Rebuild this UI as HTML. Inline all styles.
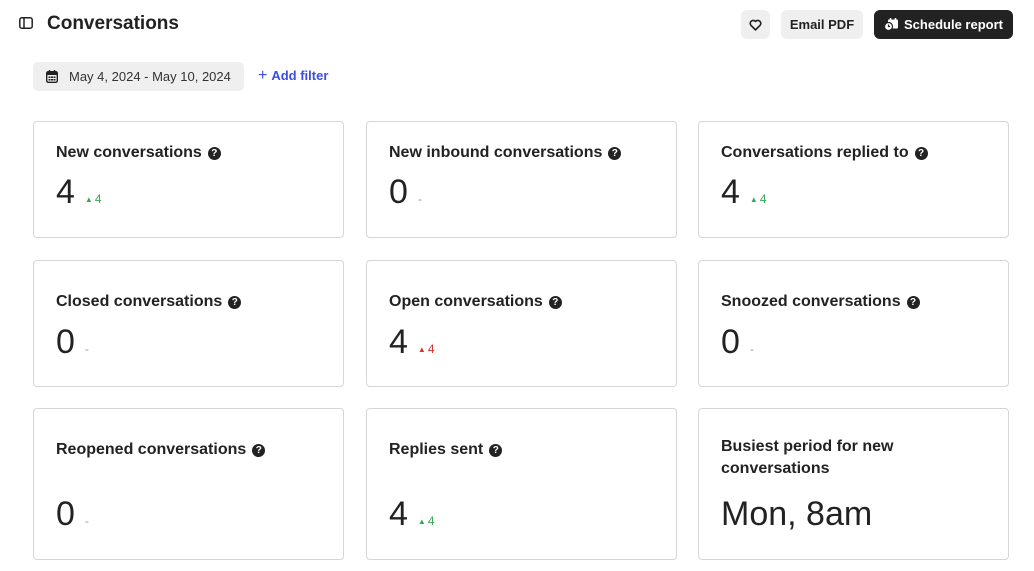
<!DOCTYPE html>
<html><head><meta charset="utf-8"><style>
*{box-sizing:border-box;margin:0;padding:0}
body{width:1034px;height:571px;background:#fff;font-family:"Liberation Sans",sans-serif;color:#1f1f1f;position:relative;overflow:hidden}
.abs{position:absolute}
h1{position:absolute;left:47px;top:13px;font-size:19px;font-weight:bold;color:#222}
.btn{position:absolute;top:10px;height:29px;border-radius:6px;background:#efefef;font-size:13px;font-weight:bold;display:flex;align-items:center;justify-content:center;color:#222}
.card{position:absolute;border:1px solid #d6d6d6;border-radius:4px;background:#fff}
.t{position:absolute;left:22px;font-size:16px;font-weight:bold;color:#222;display:flex;align-items:center}
.q{display:inline-block;width:13px;height:13px;border-radius:50%;background:#222;color:#fff;font-size:10px;text-align:center;line-height:13px;margin-left:6px;font-weight:bold}
.n{position:absolute;left:22px;font-size:34px;color:#222;display:flex;align-items:baseline}
.d{font-size:12px;margin-left:10px}
.d small{font-size:8px;margin-right:2px;position:relative;top:-1px}
.g{color:#3aa655}.r{color:#d93030}.z{color:#999}
</style></head><body>
<svg class="abs" style="left:19px;top:17px" width="14" height="12" viewBox="0 0 14 12"><rect x="0.8" y="0.8" width="12.4" height="10.4" rx="2" fill="none" stroke="#222" stroke-width="1.5"/><line x1="5" y1="1" x2="5" y2="11" stroke="#222" stroke-width="1.5"/></svg>
<h1>Conversations</h1>
<div class="btn" style="left:741px;width:29px"><svg width="13" height="12" viewBox="0 0 24 22"><path d="M12 20 L3.5 11.5 A5 5 0 0 1 12 4.5 A5 5 0 0 1 20.5 11.5 Z" fill="none" stroke="#222" stroke-width="3" stroke-linejoin="round"/></svg></div>
<div class="btn" style="left:781px;width:82px">Email PDF</div>
<div class="btn" style="left:874px;width:139px;background:#222;color:#fff"><svg style="margin-right:5px" width="15" height="13" viewBox="0 0 15 13"><rect x="4" y="1.5" width="10" height="9" rx="1" fill="#fff"/><line x1="6.5" y1="0" x2="6.5" y2="3" stroke="#fff" stroke-width="1.5"/><line x1="11.5" y1="0" x2="11.5" y2="3" stroke="#fff" stroke-width="1.5"/><circle cx="4.5" cy="8.5" r="4" fill="#fff" stroke="#222" stroke-width="1.2"/><path d="M4.5 6.5 V8.5 H6" stroke="#222" stroke-width="1.2" fill="none"/></svg>Schedule report</div>
<div class="abs" style="left:33px;top:62px;width:211px;height:29px;background:#efefef;border-radius:5px;font-size:13px;color:#333;display:flex;align-items:center">
<svg style="margin:0 11px 0 13px" width="12" height="13" viewBox="0 0 12 13"><rect x="0.7" y="1.7" width="10.6" height="10.6" rx="1.5" fill="none" stroke="#222" stroke-width="1.4"/><rect x="1" y="2" width="10" height="3" fill="#222"/><line x1="3.5" y1="0" x2="3.5" y2="3" stroke="#222" stroke-width="1.4"/><line x1="8.5" y1="0" x2="8.5" y2="3" stroke="#222" stroke-width="1.4"/><g fill="#222"><rect x="2.5" y="6.5" width="2" height="1.5"/><rect x="5" y="6.5" width="2" height="1.5"/><rect x="7.5" y="6.5" width="2" height="1.5"/><rect x="2.5" y="9" width="2" height="1.5"/><rect x="5" y="9" width="2" height="1.5"/><rect x="7.5" y="9" width="2" height="1.5"/></g></svg>May 4, 2024 - May 10, 2024</div>
<div class="abs" style="left:258px;top:67px;font-size:13px;font-weight:bold;color:#3b4ce8"><span style="font-size:16px;font-weight:normal;margin-right:4px">+</span>Add filter</div>

<div class="card" style="left:33px;top:121px;width:311px;height:117px"><div class="t" style="top:22px">New conversations<span class="q">?</span></div><div class="n" style="top:51px">4<span class="d g"><small>▲</small>4</span></div></div>
<div class="card" style="left:366px;top:121px;width:311px;height:117px"><div class="t" style="top:22px">New inbound conversations<span class="q">?</span></div><div class="n" style="top:51px">0<span class="d z">-</span></div></div>
<div class="card" style="left:698px;top:121px;width:311px;height:117px"><div class="t" style="top:22px">Conversations replied to<span class="q">?</span></div><div class="n" style="top:51px">4<span class="d g"><small>▲</small>4</span></div></div>

<div class="card" style="left:33px;top:260px;width:311px;height:127px"><div class="t" style="top:32px">Closed conversations<span class="q">?</span></div><div class="n" style="top:62px">0<span class="d z">-</span></div></div>
<div class="card" style="left:366px;top:260px;width:311px;height:127px"><div class="t" style="top:32px">Open conversations<span class="q">?</span></div><div class="n" style="top:62px">4<span class="d r"><small>▲</small>4</span></div></div>
<div class="card" style="left:698px;top:260px;width:311px;height:127px"><div class="t" style="top:32px">Snoozed conversations<span class="q">?</span></div><div class="n" style="top:62px">0<span class="d z">-</span></div></div>

<div class="card" style="left:33px;top:408px;width:311px;height:152px"><div class="t" style="top:32px">Reopened conversations<span class="q">?</span></div><div class="n" style="top:86px">0<span class="d z">-</span></div></div>
<div class="card" style="left:366px;top:408px;width:311px;height:152px"><div class="t" style="top:32px">Replies sent<span class="q">?</span></div><div class="n" style="top:86px">4<span class="d g"><small>▲</small>4</span></div></div>
<div class="card" style="left:698px;top:408px;width:311px;height:152px"><div class="t" style="top:27px;line-height:22px;width:220px">Busiest period for new conversations</div><div class="n" style="top:86px">Mon, 8am</div></div>
</body></html>
